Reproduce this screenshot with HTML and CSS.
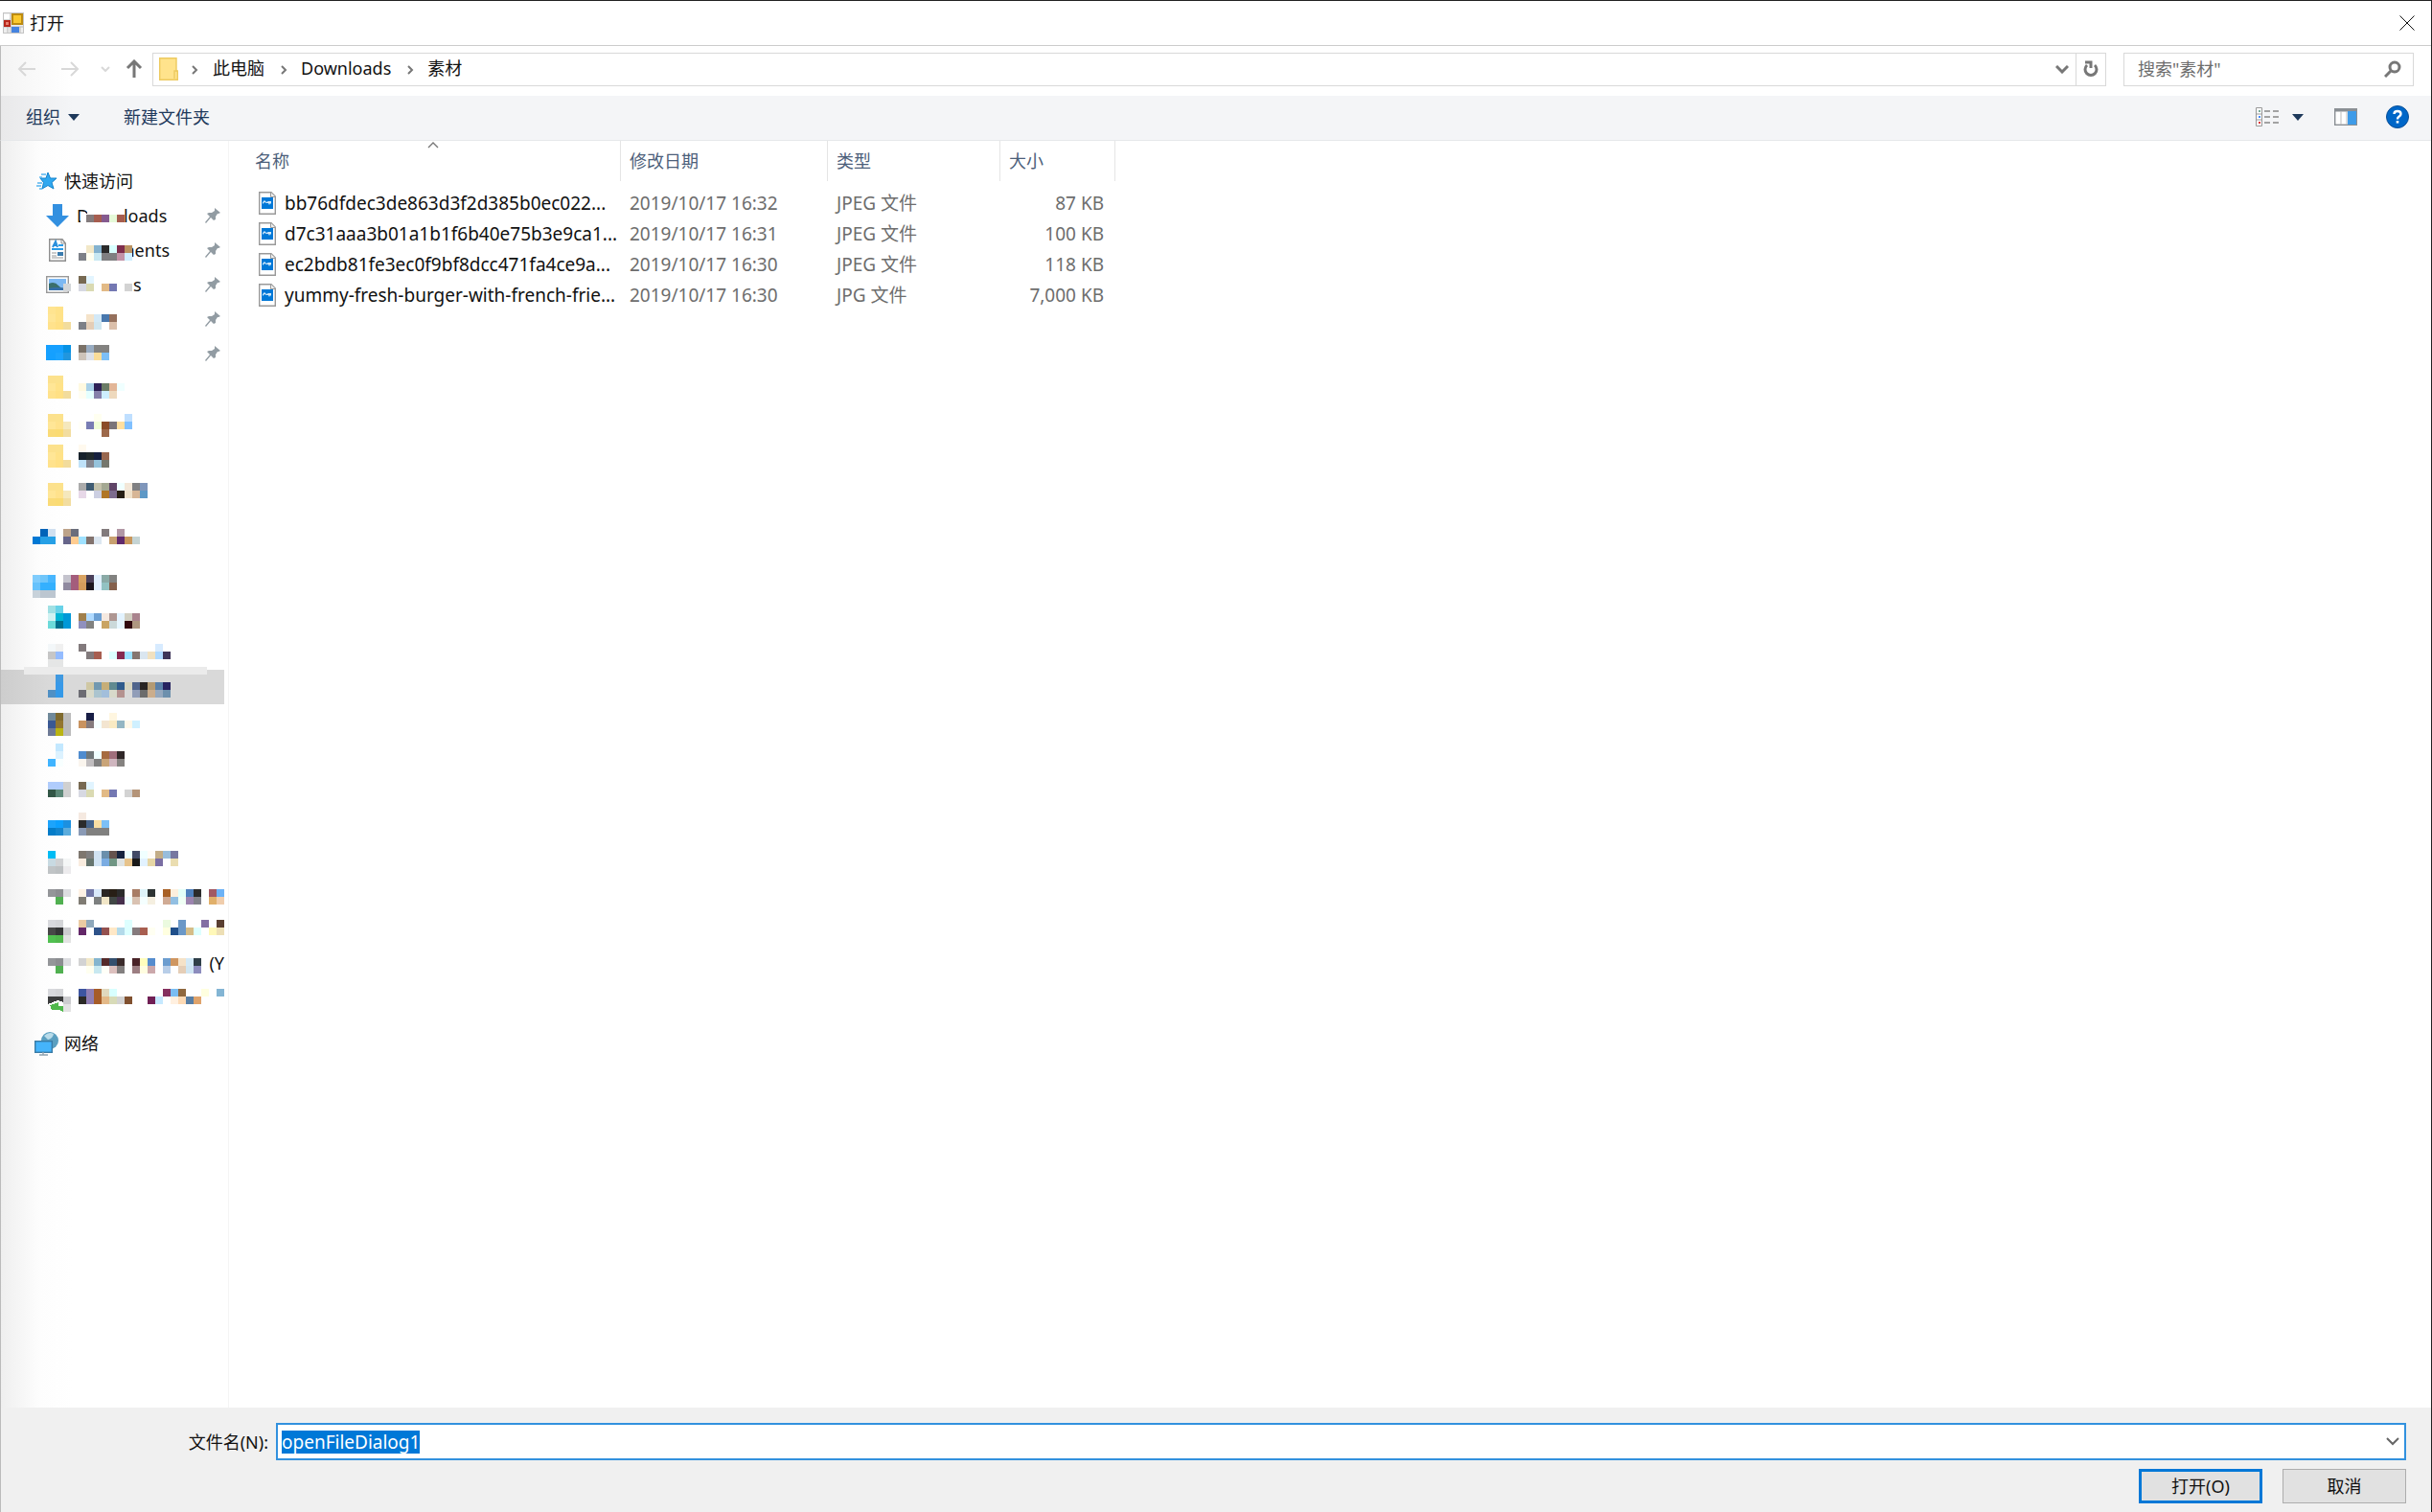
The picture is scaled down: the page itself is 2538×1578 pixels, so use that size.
FILE: index.html
```html
<!DOCTYPE html>
<html lang="zh-CN">
<head>
    <meta charset="UTF-8">
    <meta name="viewport" content="width=device-width, initial-scale=1.0">
    <title>打开</title>
    <link rel="stylesheet" href="styles.css">
</head>
<body>
<svg class="defs" width="0" height="0" aria-hidden="true">
    <symbol id="pin" viewBox="0 0 16 16">
        <path d="M10 0 L16 5 L14 6 L13 6 L11 9 L11 12 L9 13 L6 10 L1 16 L0 15 L5 9 L2 6 L4 5 L7 5 L10 3 Z" fill="#929ca3"/>
    </symbol>
    <symbol id="image-file" viewBox="0 0 18 24">
        <path d="M.7.7H13L17.3 5V23.3H.7Z" fill="#fff" stroke="#999" stroke-width="1.4"/>
        <path d="M12.5.7V5.500H17.300" fill="#eee" stroke="#999"/>
        <rect x="3" y="6" width="12" height="12" fill="#0078d7"/>
        <path d="M4 11L6 9L8 11L10 10L13 10V13L12 12L11 14L10 12L8 12L6 11L4 13Z" fill="#cfe6fa"/>
    </symbol>
</svg>

<header class="titlebar">
    <svg class="app-icon" width="22" height="22" viewBox="0 0 22 22">
        <rect x=".5" y=".5" width="21" height="21" fill="#eee" stroke="#c4c4c4"/>
        <path d="M1 7H8M1 15H21M8 1V21M5 15V21M18 15V21" stroke="#bbb"/>
        <rect x="1" y="2" width="6" height="5" fill="#fff"/>
        <rect x="1" y="8" width="7" height="7" fill="#b8281c"/>
        <rect x="3" y="10" width="3" height="3" fill="#e88070"/>
        <rect x="9" y="1" width="12" height="12" fill="#bd8b10"/>
        <rect x="11" y="3" width="8" height="8" fill="#fbc92e"/>
        <rect x="9" y="15" width="8" height="6" fill="#4583e0"/>
    </svg>
    <h1>打开</h1>
    <button class="close" aria-label="关闭">
        <svg width="16" height="16" viewBox="0 0 16 16"><path d="M.5.5L15.500 15.500M15.500.5L.5 15.500" stroke="#111" fill="none"/></svg>
    </button>
</header>

<div class="address-row">
    <button class="nav-btn" aria-label="后退">
        <svg width="20" height="18" viewBox="0 0 20 18"><path d="M19 9H2M9 2L2 9L9 16" fill="none" stroke="#d8d8d8" stroke-width="2"/></svg>
    </button>
    <button class="nav-btn" aria-label="前进">
        <svg width="20" height="18" viewBox="0 0 20 18"><path d="M1 9H18M11 2L18 9L11 16" fill="none" stroke="#d8d8d8" stroke-width="2"/></svg>
    </button>
    <button class="nav-btn narrow" aria-label="最近浏览的位置">
        <svg width="10" height="6" viewBox="0 0 10 6"><path d="M1 1L5 5L9 1" fill="none" stroke="#d8d8d8" stroke-width="2"/></svg>
    </button>
    <button class="nav-btn narrow" aria-label="上移">
        <svg width="18" height="20" viewBox="0 0 18 20"><path d="M9 19V2M2 9L9 2L16 9" fill="none" stroke="#777" stroke-width="3"/></svg>
    </button>
    <div class="address">
        <svg class="folder" width="20" height="24" viewBox="0 0 20 24">
            <path d="M.7.7H18V14H19.300V23.300H.7Z" fill="#ffe38c" stroke="#edca60" stroke-width="1.400"/>
            <path d="M16 22V14H19" fill="none" stroke="#edca60" stroke-width="1.400"/>
        </svg>
        <svg class="sep" width="7" height="10" viewBox="0 0 7 10"><path d="M1 1L5 5L1 9" fill="none" stroke="#777" stroke-width="2"/></svg>
        <a href="#">此电脑</a>
        <svg class="sep" width="7" height="10" viewBox="0 0 7 10"><path d="M1 1L5 5L1 9" fill="none" stroke="#777" stroke-width="2"/></svg>
        <a href="#">Downloads</a>
        <svg class="sep" width="7" height="10" viewBox="0 0 7 10"><path d="M1 1L5 5L1 9" fill="none" stroke="#777" stroke-width="2"/></svg>
        <a href="#">素材</a>
        <button class="history" aria-label="上一个位置">
            <svg width="14" height="9" viewBox="0 0 14 9"><path d="M1 1L7 7L13 1" fill="none" stroke="#777" stroke-width="3"/></svg>
        </button>
        <button class="refresh" aria-label="刷新">
            <svg width="16" height="18" viewBox="0 0 16 18"><path d="M12 5A6 6 0 1 1 4 5M2 2H8V8" fill="none" stroke="#777" stroke-width="3"/></svg>
        </button>
    </div>
    <div class="search">
        <input type="text" aria-label="搜索" placeholder='搜索"素材"'>
        <svg width="18" height="18" viewBox="0 0 18 18"><circle cx="11" cy="7" r="5" fill="none" stroke="#777" stroke-width="3"/><path d="M8 10L1 17" stroke="#777" stroke-width="3"/></svg>
    </div>
</div>

<div class="toolbar">
    <button class="organize">组织
        <svg width="12" height="7" viewBox="0 0 12 7"><path d="M0 0H12L6 7Z" fill="#1e395b"/></svg>
    </button>
    <button>新建文件夹</button>
    <button class="view" aria-label="更改视图">
        <svg width="24" height="20" viewBox="0 0 24 20">
            <path d="M.5.5H6.500V19.500H.5ZM.5 7H6.500M.5 13H6.500" fill="#fff" stroke="#999"/>
            <path d="M9 4H15M18 4H24M9 10H15M18 10H24M9 16H15M18 16H24" stroke="#888" stroke-width="1.400"/>
            <rect x="3" y="3" width="2" height="2" fill="#7a9"/>
            <rect x="3" y="9" width="2" height="2" fill="#48f"/>
            <rect x="3" y="15" width="2" height="2" fill="#d33"/>
        </svg>
        <svg width="12" height="7" viewBox="0 0 12 7"><path d="M0 0H12L6 7Z" fill="#1e395b"/></svg>
    </button>
    <button aria-label="显示预览窗格">
        <svg width="24" height="18" viewBox="0 0 24 18">
            <rect x=".7" y=".7" width="22.600" height="16.600" fill="#fff" stroke="#8a8f94" stroke-width="1.400"/>
            <path d="M0 2H24" stroke="#8a8f94" stroke-width="3"/>
            <path d="M7 3V17M13 3V17" stroke="#bbb"/>
            <rect x="14" y="3" width="9" height="14" fill="#3e9be8"/>
        </svg>
    </button>
    <button aria-label="获取帮助">
        <svg width="24" height="24" viewBox="0 0 24 24">
            <circle cx="12" cy="12" r="11.500" fill="#0067c8" stroke="#0a4f96"/>
            <path d="M8.500 9Q8.500 6 12 6T15.500 9Q15.500 10.500 13.500 11.800Q12 12.800 12 14.500" fill="none" stroke="#fff" stroke-width="2.400"/>
            <rect x="10.700" y="16" width="2.600" height="2.600" fill="#fff"/>
        </svg>
    </button>
</div>

<main>
    <nav aria-label="导航窗格">
        <a class="row top" href="#">
            <svg class="icon" width="22" height="20" viewBox="0 0 22 20">
                <path d="M12 1L14.500 7H21L16 11.500L18 18L12 14.500L6 18L7.500 11.500L4 7H10Z" fill="#2fa8f0" stroke="#1583cc"/>
                <path d="M5 3H10M3 6H6M1 12H6M0 15H5M3 18H6" stroke="#55b4ee" stroke-width="1.400"/>
            </svg>
            <span>快速访问</span>
        </a>
        <a class="row" href="#">
            <svg class="icon" width="24" height="24" viewBox="0 0 24 24"><path d="M7 0H17V12H24L12 24L0 12H7Z" fill="#3390e0"/></svg>
            <span>Downloads</span>
            <svg class="pin"><use href="#pin"/></svg>
            <svg class="mosaic" viewBox="1 0 233 36" data-cells="17 90 837b7d a65d4f 855a8f e5f9d8 a65d4f"><path d="M84 14H88L91 17V26H84ZM91 6H129V26H91Z" fill="#fff"/></svg>
        </a>
        <a class="row" href="#">
            <svg class="icon" width="24" height="24" viewBox="0 0 24 24">
                <path d="M3.700.7H17L20.300 5V23.300H3.700Z" fill="#fff" stroke="#8e8e8e" stroke-width="1.400"/>
                <path d="M16 1V5H20" fill="none" stroke="#8e8e8e"/>
                <path d="M7 9L10 3L12 9M8 7H12" fill="none" stroke="#2a8fdc" stroke-width="2"/>
                <path d="M6 11H18M13 7H18" stroke="#2a9be8" stroke-width="2"/>
                <path d="M6 15H11M6 18H11M6 20H18" stroke="#999"/>
                <rect x="12" y="14" width="6" height="4" fill="#3b7cae"/>
            </svg>
            <span>Documents</span>
            <svg class="pin"><use href="#pin"/></svg>
            <svg class="mosaic" viewBox="1 0 233 36" data-cells="13 90 f2e8c8 84b2cf 2b2b2b d8ffff 7f2e4d ba9260; 21 82 7d8087 fffff0 c8e8f2 7f7f81 7f7f81 c293a7 d0efff"><rect x="79" y="4" width="57" height="26" fill="#fff"/></svg>
        </a>
        <a class="row" href="#">
            <svg class="icon" width="24" height="24" viewBox="0 0 24 24">
                <rect x=".7" y="3.700" width="22.600" height="16.600" fill="#fff" stroke="#999" stroke-width="1.400"/>
                <rect x="3" y="6" width="18" height="12" fill="#7db8f2"/>
                <path d="M3 11Q9 8 13 13T21 14V18H3Z" fill="#3b6f6b"/>
                <path d="M3 16Q10 14 21 16V18H3Z" fill="#356ea8"/>
            </svg>
            <span>Pictures</span>
            <svg class="pin"><use href="#pin"/></svg>
            <svg class="mosaic" viewBox="1 0 233 36" data-cells="17 66 d3d6d9; 9 82 776952 e3f5ff; 17 82 d7d9e2 dadab2 . e2ba86 7478b2 . d3d3d3"><rect x="79" y="4" width="60" height="26" fill="#fff"/></svg>
        </a>
        <a class="row" href="#" aria-label="文件夹">
            <svg class="pin"><use href="#pin"/></svg>
            <svg class="mosaic" viewBox="1 0 233 36" data-cells="5 50 ffe490 ffe288; 13 50 ffe696 ffe288; 21 50 ffe28c ffe084 f2dc9c; 13 90 f5e3c9 d3e9f7 4877ad 95705c; 21 82 7d8087 e4cdb6 d0e6f0 . dbbfaa"></svg>
        </a>
        <a class="row" href="#" aria-label="桌面">
            <svg class="pin"><use href="#pin"/></svg>
            <svg class="mosaic" viewBox="1 0 233 36" data-cells="9 48 16a0ff; 17 48 16a0ff; 9 50 16a0ff 16a0ff 0792e4; 17 50 14a0ff 1ca4ff 2196de; 9 82 7a7167 98acc2 838280 838280; 17 82 cdc3b9 dde1e9 f9dc98 7cbff6"></svg>
        </a>
        <a class="row" href="#" aria-label="文件夹">
            <svg class="mosaic" viewBox="1 0 233 36" data-cells="5 50 fce18d fce28c; 13 50 ffe696 ffe288; 21 50 ffe28c ffe084 f2dc9c; 13 82 fff9e0 aad1e8 2d2056 6b7c66 e2b697 f0ffff; 21 82 fffdf2 e5ffff 8680ab cdeeff eed9bd"></svg>
        </a>
        <a class="row" href="#" aria-label="文件夹">
            <svg class="mosaic" viewBox="1 0 233 36" data-cells="9 50 fce18d fce28c; 17 50 ffe696 ffe28c f5e8bd; 25 50 fadb78 fadb74 f2dda0; 9 98 fffff0; 9 130 bfdfff; 17 82 fffff8 787db3 f0ffd8 8a4c28 7b7479 ffdf9e 80c0ff; 25 106 9d694b"></svg>
        </a>
        <a class="row" href="#" aria-label="文件夹">
            <svg class="mosaic" viewBox="1 0 233 36" data-cells="5 50 fce18d fce28c; 13 50 ffe696 ffe288; 21 50 ffe28c ffe084 f2dc9c; 5 82 fff9ee; 13 82 17212b 20292b 16203f 98674f; 21 82 bfe1f8 858791 95c3dc 75776d"></svg>
        </a>
        <a class="row" href="#" aria-label="文件夹">
            <svg class="mosaic" viewBox="1 0 233 36" data-cells="9 50 fce18d fce28c; 17 50 ffe696 ffe28c f5e8bd; 25 50 fadb78 fadb74 f2dda0; 9 82 ababab 3f5b72 c4c2ac a4a892 5f4467 f0ffff f3e7d8 808082 7f96bb; 17 82 e7d8e8 . cccfe2 b07525 7d6c8e 271e13 efe1ca d7b696 5d98c6"></svg>
        </a>

        <a class="row group" href="#" aria-label="OneDrive">
            <svg class="mosaic" viewBox="1 0 233 36" data-cells="9 42 0063b8 d0e0f0; 17 34 0078d4 26a0e6 26a0e6; 9 66 bda389 6a6e7c . . . 827b7d . b197a5; 17 66 66658a ffcc90 9fe1ff 82736e dce7f1 . c8a070 602a6c c8965c c5d4d4"></svg>
        </a>

        <a class="row group" href="#" aria-label="此电脑">
            <svg class="mosaic" viewBox="1 0 233 36" data-cells="9 34 80ccfc 70c6fa 48b6fe; 17 34 66c2fc 34b0fe 34b0fe; 25 34 c8d2da bcc6d0 bcc6d0; 9 66 c4c3cd a45d7c d9a362 4a405a e1f0ff 8aaaa6 828280; 17 66 908aa0 a45d7c d59c5c 1b161f e1f0ff 92c2c2 85604c"></svg>
        </a>
        <a class="row" href="#" aria-label="3D 对象">
            <svg class="mosaic" viewBox="1 0 233 36" data-cells="5 50 a0e0e4 68d2e8; 13 50 d0f2f2 00b4d4 0098d8; 21 50 6cdada 00708e 0098d8; 13 82 a07f4b b0daff 6ca0d4 f5e9e0 ae9692 e3f3ff d1cfc2 aa848e; 21 82 9090be 828280 . c9a463 cbd9da e6f6ff 310a10 ae9780"></svg>
        </a>
        <a class="row" href="#" aria-label="设备">
            <svg class="mosaic" viewBox="1 0 233 36" data-cells="9 50 f3f7f9 f0f0f0; 17 50 c6c6c6 94bcff; 25 50 e5e6e6 e5e6e6; 9 82 827a7c; 9 162 d7ebff; 17 90 827a7c a85e50 . dcffff 852a50 9be1ff 857670 dae6f0 f1e1c0 afd9ff 3d3458"></svg>
        </a>
        <a class="row selected" href="#" aria-label="下载" aria-current="true">
            <svg class="mosaic" viewBox="1 0 233 36" data-cells="5 58 4099e0; 13 58 3899e8; 21 50 5090c4 3399e8; 13 90 cfc7a3 7198b0 c6ae78 608a90 2f5b8c d6d4c0 50648c 292423 b39a73 5a80a8 262260; 21 82 6c6c73 d8d9ca abc4cf a2bedb d8d9ca b49290 d9d9d9 919db8 6c6c6c cbad8c 95a8be 6d90ad"><rect x="25" y="-3" width="191" height="8" fill="#ebebeb"/></svg>
        </a>
        <a class="row" href="#" aria-label="音乐">
            <svg class="mosaic" viewBox="1 0 233 36" data-cells="9 50 70899a 7f6a2e bcbcbc; 17 50 3a5893 93762f bcbcbc; 25 50 6e7a96 bab413 bcbcbc; 9 90 181d45; 9 114 fff6e0; 17 82 c99360 857b7d f6ffff f3e5d0 f9eac3 94b6c3 fff8e9 cff0ff"></svg>
        </a>
        <a class="row" href="#" aria-label="音乐">
            <svg class="mosaic" viewBox="1 0 233 36" data-cells="5 58 c3e8ff; 13 58 dcf2ff; 21 50 40b4ff f8ffff; 13 82 4f8ccf 70787a f0ffff a66b40 a06f7d 302728; 21 82 faf5ee c1bec0 808080 c9a478 cfb6bf 858280"></svg>
        </a>
        <a class="row" href="#" aria-label="图片">
            <svg class="mosaic" viewBox="1 0 233 36" data-cells="9 50 b0ccfc b0ccfc d0d0d0; 17 50 325646 5c8878 d0d0d0; 9 82 776952 e1f4ff; 17 82 d7d9e2 dadab2 . e2ba86 7478b2 . d3d3d3 b49478"></svg>
        </a>
        <a class="row" href="#" aria-label="桌面">
            <svg class="mosaic" viewBox="1 0 233 36" data-cells="5 82 f5e9e0; 13 50 1ca4fc 0ca0ff 1c90e0; 21 50 047cc8 1484cc 5cacdc; 13 82 2b2b2b 46648a f9dfa3 7cc0f6; 21 82 8a9ab5 80807f 80807f 80807f"></svg>
        </a>
        <a class="row" href="#" aria-label="本地磁盘">
            <svg class="mosaic" viewBox="1 0 233 36" data-cells="9 50 00bcf4; 17 50 c8dae2 d0d2d4 f4f6f6; 25 50 c0c4c6 bcc0c2 ecebed; 9 82 7e776f 808080 d1e3f3 6a8fac 65534d 16243f ecffff 414a66 f0ffff fffcf8 c3ad87 98bddc 7777a0; 17 82 f9ecdf 66756f d1e3f3 7aace2 709684 dfe3e2 e7c38b 191919 e2f2ff e6d6a5 7a6ea3 . eaddb0"></svg>
        </a>
        <a class="row" href="#" aria-label="网络驱动器">
            <svg class="mosaic" viewBox="1 0 233 36" data-cells="13 50 949699 8c8e91 dcdde0; 21 58 50b050; 13 82 fff2e5 7278a6 d9e9fa 2a2624 281f16 2b2b2b . a87d66 dff4f9 2d3333 . a86126 fdefdd e3fff9 4f80bd 2b2b2b . a15963 6cb2f6; 21 82 807c74 . 7d8080 f1e6c7 404745 46304c f0ffff d9c2b2 f5ffff f5efe0 . d0ab94 92bfe2 f0fff5 9c84af 82828b . e1b06a f0cdac"></svg>
        </a>
        <a class="row" href="#" aria-label="网络驱动器">
            <svg class="mosaic" viewBox="1 0 233 36" data-cells="9 50 d8d9dd d4d5d8; 17 50 474747 343536 cccccf; 25 50 50c050 50b84c e3e3e3; 9 82 ebcba3 8fa8bb . . . . ddffff . . . . ebfadf . 6b98c7 . . 836fa3 . 5a3f31; 17 82 632768 . 2e5289 94514f ffe8c7 b3daea dcffff 857b7d a85e50 fffff2 . ffffe0 1f4f8a 6b98c7 d5bd88 ddffff . fff8b8 eddfb5"></svg>
        </a>
        <a class="row" href="#">
            <svg class="mosaic" viewBox="1 0 233 36" data-cells="13 50 949699 8c8e91 dcdde0; 21 58 50b050; 13 82 d3d3d3 f2e8c8 84b5cf 552a2a 34506e 3b2b2b . 4a2328 fffdbd 558cce . 6c9dcf cf9660 f5e2c8 d3e9f7 2f3f48; 21 90 fffff0 c8e8f0 fffff8 dcc0be 838080 . 9c7e82 fffde0 cba8ab . b8cee8 . e5ceb7 d0e6f3 8c8cbd"></svg>
            <span class="drive-letter">(Y</span>
        </a>
        <a class="row" href="#" aria-label="网络驱动器">
            <svg class="mosaic" viewBox="1 0 233 36" data-cells="9 50 d8d9dd d4d5d8; 17 66 cccccf; 25 66 e3e3e3; 9 82 3d55a0 8f7eb3 a65c28 e0d8be d8ffff . . . . . . 85305f 7abdf2 8f683e . . ffffe0 . 83b5d4; 17 82 2b2a27 8f7eb3 a65c28 e3b988 d8dbb8 d3d3d3 80502f . . 701f55 c6e9ff . fff0e0 fddab5 577ea5 dfa36b"><path d="M50 17H66V23L60 21L50 25Z" fill="#3c3d3e"/><path d="M52 26L61 23V27H66V33L62 31H54Z" fill="#50b84c"/></svg>
        </a>

        <a class="row top group" href="#">
            <svg class="icon" width="26" height="26" viewBox="0 0 26 26">
                <circle cx="16" cy="10" r="9" fill="#5b9fc0"/>
                <path d="M10 5Q15 0 20 3Q19 8 14 9Z" fill="#b9dcea"/>
                <rect x=".7" y="10.700" width="17.600" height="11.600" fill="#45b4fb" stroke="#3a7ba5" stroke-width="1.400"/>
                <path d="M9 22V25M5 25H14" stroke="#8fa3b0" stroke-width="1.400"/>
            </svg>
            <span>网络</span>
        </a>
    </nav>

    <section class="files">
        <table>
            <thead>
            <tr>
                <th class="name">名称
                    <svg class="sort" width="12" height="7" viewBox="0 0 12 7"><path d="M1 6L6 1L11 6" fill="none" stroke="#777" stroke-width="1.400"/></svg>
                </th>
                <th class="date">修改日期</th>
                <th class="type">类型</th>
                <th class="size">大小</th>
            </tr>
            </thead>
            <tbody>
            <tr>
                <td><svg class="file-icon"><use href="#image-file"/></svg>bb76dfdec3de863d3f2d385b0ec022...</td>
                <td>2019/10/17 16:32</td>
                <td>JPEG 文件</td>
                <td>87 KB</td>
            </tr>
            <tr>
                <td><svg class="file-icon"><use href="#image-file"/></svg>d7c31aaa3b01a1b1f6b40e75b3e9ca1...</td>
                <td>2019/10/17 16:31</td>
                <td>JPEG 文件</td>
                <td>100 KB</td>
            </tr>
            <tr>
                <td><svg class="file-icon"><use href="#image-file"/></svg>ec2bdb81fe3ec0f9bf8dcc471fa4ce9a...</td>
                <td>2019/10/17 16:30</td>
                <td>JPEG 文件</td>
                <td>118 KB</td>
            </tr>
            <tr>
                <td><svg class="file-icon"><use href="#image-file"/></svg>yummy-fresh-burger-with-french-frie...</td>
                <td>2019/10/17 16:30</td>
                <td>JPG 文件</td>
                <td>7,000 KB</td>
            </tr>
            </tbody>
        </table>
    </section>
</main>

<footer>
    <div class="filename">
        <label for="filename">文件名(N):</label>
        <div class="combo">
            <input type="text" id="filename" value="openFileDialog1" spellcheck="false" autocomplete="off">
            <button aria-label="文件名列表">
                <svg width="14" height="9" viewBox="0 0 14 9"><path d="M1 1L7 7L13 1" fill="none" stroke="#666" stroke-width="2"/></svg>
            </button>
        </div>
    </div>
    <div class="actions">
        <button class="primary">打开(O)</button>
        <button>取消</button>
    </div>
</footer>

<script src="dialog.js"></script>
</body>
</html>
```
FILE: styles.css
```css
* {
    box-sizing: border-box;
}

html {
    height: 100%;
}

body {
    margin: 0;
    min-height: 100%;
    display: flex;
    flex-direction: column;
    background: #fff;
    color: #111;
    border-top: 1px solid #222;
    border-right: 1px solid #222;
    font-family: "Noto Sans", "Noto Sans CJK SC", sans-serif;
    font-size: 18px;
    line-height: 24px;
}

a {
    color: inherit;
    text-decoration: none;
}

button, input {
    font: inherit;
    color: inherit;
    border: none;
    background: none;
    padding: 0;
}

svg {
    display: block;
    flex: none;
}

.defs {
    position: absolute;
}

/* title bar */
.titlebar {
    display: flex;
    align-items: center;
    height: 47px;
    padding: 0 17px 0 3px;
    border-bottom: 1px solid #ccc;
}

.titlebar h1 {
    margin: 0 auto 0 6px;
    font-size: 18px;
    font-weight: normal;
}

/* address bar */
.address-row {
    display: flex;
    align-items: center;
    height: 52px;
    padding: 0 18px 4px 4px;
    border-left: 1px solid #bbb;
    background: linear-gradient(to right, #f4f4f4, #fff 75px);
}

.nav-btn {
    display: flex;
    justify-content: center;
    width: 45px;
}

.nav-btn.narrow {
    width: 30px;
}

.address, .search {
    display: flex;
    align-items: center;
    height: 35px;
    border: 1px solid #d9d9d9;
    background: #fff;
}

.address {
    flex: 1;
    margin-left: 4px;
    padding-left: 6px;
}

.address .sep {
    margin: 2px 14px 0 17px;
}

.address .folder + .sep {
    margin: 2px 15px 0 14px;
}

.address a {
    margin-top: -2px;
}

.history {
    margin-left: auto;
    padding: 0 7px;
}

.refresh {
    height: 100%;
    padding: 0 7px;
    border-left: 1px solid #d9d9d9;
}

.search {
    width: 303px;
    margin-left: 18px;
    padding: 0 12px 0 14px;
}

.search input {
    flex: 1;
    min-width: 0;
    outline: none;
}

.search input::placeholder {
    color: #6d6d6d;
}

/* command bar */
.toolbar {
    display: flex;
    align-items: center;
    height: 47px;
    padding: 0 23px 2px 26px;
    border-left: 1px solid #bbb;
    border-bottom: 1px solid #e6e8ea;
    background: linear-gradient(to right, #e9e9ea, #f4f5f7 75px);
    color: #1e395b;
}

.toolbar .organize, .toolbar .view {
    display: flex;
    align-items: center;
    gap: 8px;
}

.toolbar .organize {
    margin-right: 46px;
}

.toolbar .view {
    gap: 14px;
    margin-left: auto;
}

.toolbar .view ~ button {
    margin-left: 30px;
}

.toolbar .view + button {
    margin-left: 32px;
}

/* navigation pane */
main {
    flex: 1;
    display: flex;
}

nav {
    width: 239px;
    padding: 24px 4px 24px 0;
    border-left: 1px solid #bbb;
    border-right: 1px solid #f5f5f5;
    background: linear-gradient(to right, #efefef, #fdfdfd 40px, #fff 75px);
}

.row {
    position: relative;
    display: flex;
    align-items: center;
    height: 36px;
    padding: 0 4px 0 47px;
    overflow: visible;
    white-space: nowrap;
}

.row.top {
    padding-left: 35px;
}

.row.top .icon {
    width: 26px;
}

.row.group {
    margin-top: 12px;
}

.row.selected {
    background: linear-gradient(to right, #cdcdcd, #d9d9d9 50px);
}

.row .icon {
    margin-right: 8px;
}

.row.top .icon {
    margin-right: 5px;
}

.row .pin {
    width: 16px;
    height: 16px;
    margin-left: auto;
}

.row .drive-letter {
    margin-left: auto;
    margin-right: -4px;
}

/* pixelated patches lie over the labels */
.mosaic {
    position: absolute;
    left: 0;
    top: 0;
    width: 233px;
    height: 36px;
    overflow: visible;
    shape-rendering: crispEdges;
}

/* file list */
.files {
    flex: 1;
    padding-left: 17px;
}

.files table {
    table-layout: fixed;
    width: 908px;
    border-collapse: separate;
    border-spacing: 0;
}

.files th {
    position: relative;
    height: 42px;
    padding: 0 9px;
    border-right: 1px solid #e5e5e5;
    color: #4c607a;
    font-weight: normal;
    text-align: left;
}

.files th.name {
    width: 392px;
    padding-left: 10px;
}

.files th.date {
    width: 216px;
}

.files th.type {
    width: 180px;
}

.files th.size {
    width: 120px;
}

.sort {
    position: absolute;
    top: 1px;
    left: 50%;
    margin-left: -6px;
}

.files td {
    height: 32px;
    padding: 0 9px;
    color: #6d6d6d;
    font-size: 19px;
    white-space: nowrap;
}

.files tbody::before {
    content: "";
    display: block;
    height: 7px;
}

.files td:first-child {
    display: flex;
    align-items: center;
    padding: 0 0 0 14px;
    color: #111;
}

.files td:last-child {
    padding-right: 12px;
    text-align: right;
}

.file-icon {
    width: 18px;
    height: 24px;
    margin-right: 9px;
}

/* bottom panel */
footer {
    padding: 16px 26px 9px;
    background: #f0f0f0;
    border-left: 1px solid #bbb;
}

.filename {
    display: flex;
    align-items: center;
}

.filename label {
    width: 287px;
    padding-right: 8px;
    margin-left: -26px;
    text-align: right;
}

.combo {
    flex: 1;
    display: flex;
    align-items: center;
    height: 39px;
    padding: 0 5px 0 4px;
    border: 2px solid #3291de;
    background: #fff;
}

.combo input {
    flex: 1;
    min-width: 0;
    font-size: 19px;
    outline: none;
}

.combo input::selection {
    background: #0078d7;
    color: #fff;
}

.actions {
    display: flex;
    justify-content: flex-end;
    gap: 21px;
    margin-top: 9px;
}

.actions button {
    width: 129px;
    height: 36px;
    border: 1px solid #adadad;
    background: #e1e1e1;
}

.actions .primary {
    border: 3px solid #0078d7;
}
```
FILE: dialog.js
```js
const CELL = 8;

// data-cells: "y x color color . color; y x ..." where "." skips a cell
function drawMosaic(svg) {
    svg.dataset.cells.split(";").forEach(line => {
        const [y, x, ...colors] = line.trim().split(" ");
        colors.forEach((color, i) => {
            if (color === ".") return;
            const rect = document.createElementNS("http://www.w3.org/2000/svg", "rect");
            rect.setAttribute("x", Number(x) + i * CELL);
            rect.setAttribute("y", y);
            rect.setAttribute("width", CELL);
            rect.setAttribute("height", CELL);
            rect.setAttribute("fill", "#" + color);
            svg.appendChild(rect);
        });
    });
}

document.querySelectorAll(".mosaic").forEach(drawMosaic);

const filename = document.getElementById("filename");
filename.focus();
filename.select();
```
